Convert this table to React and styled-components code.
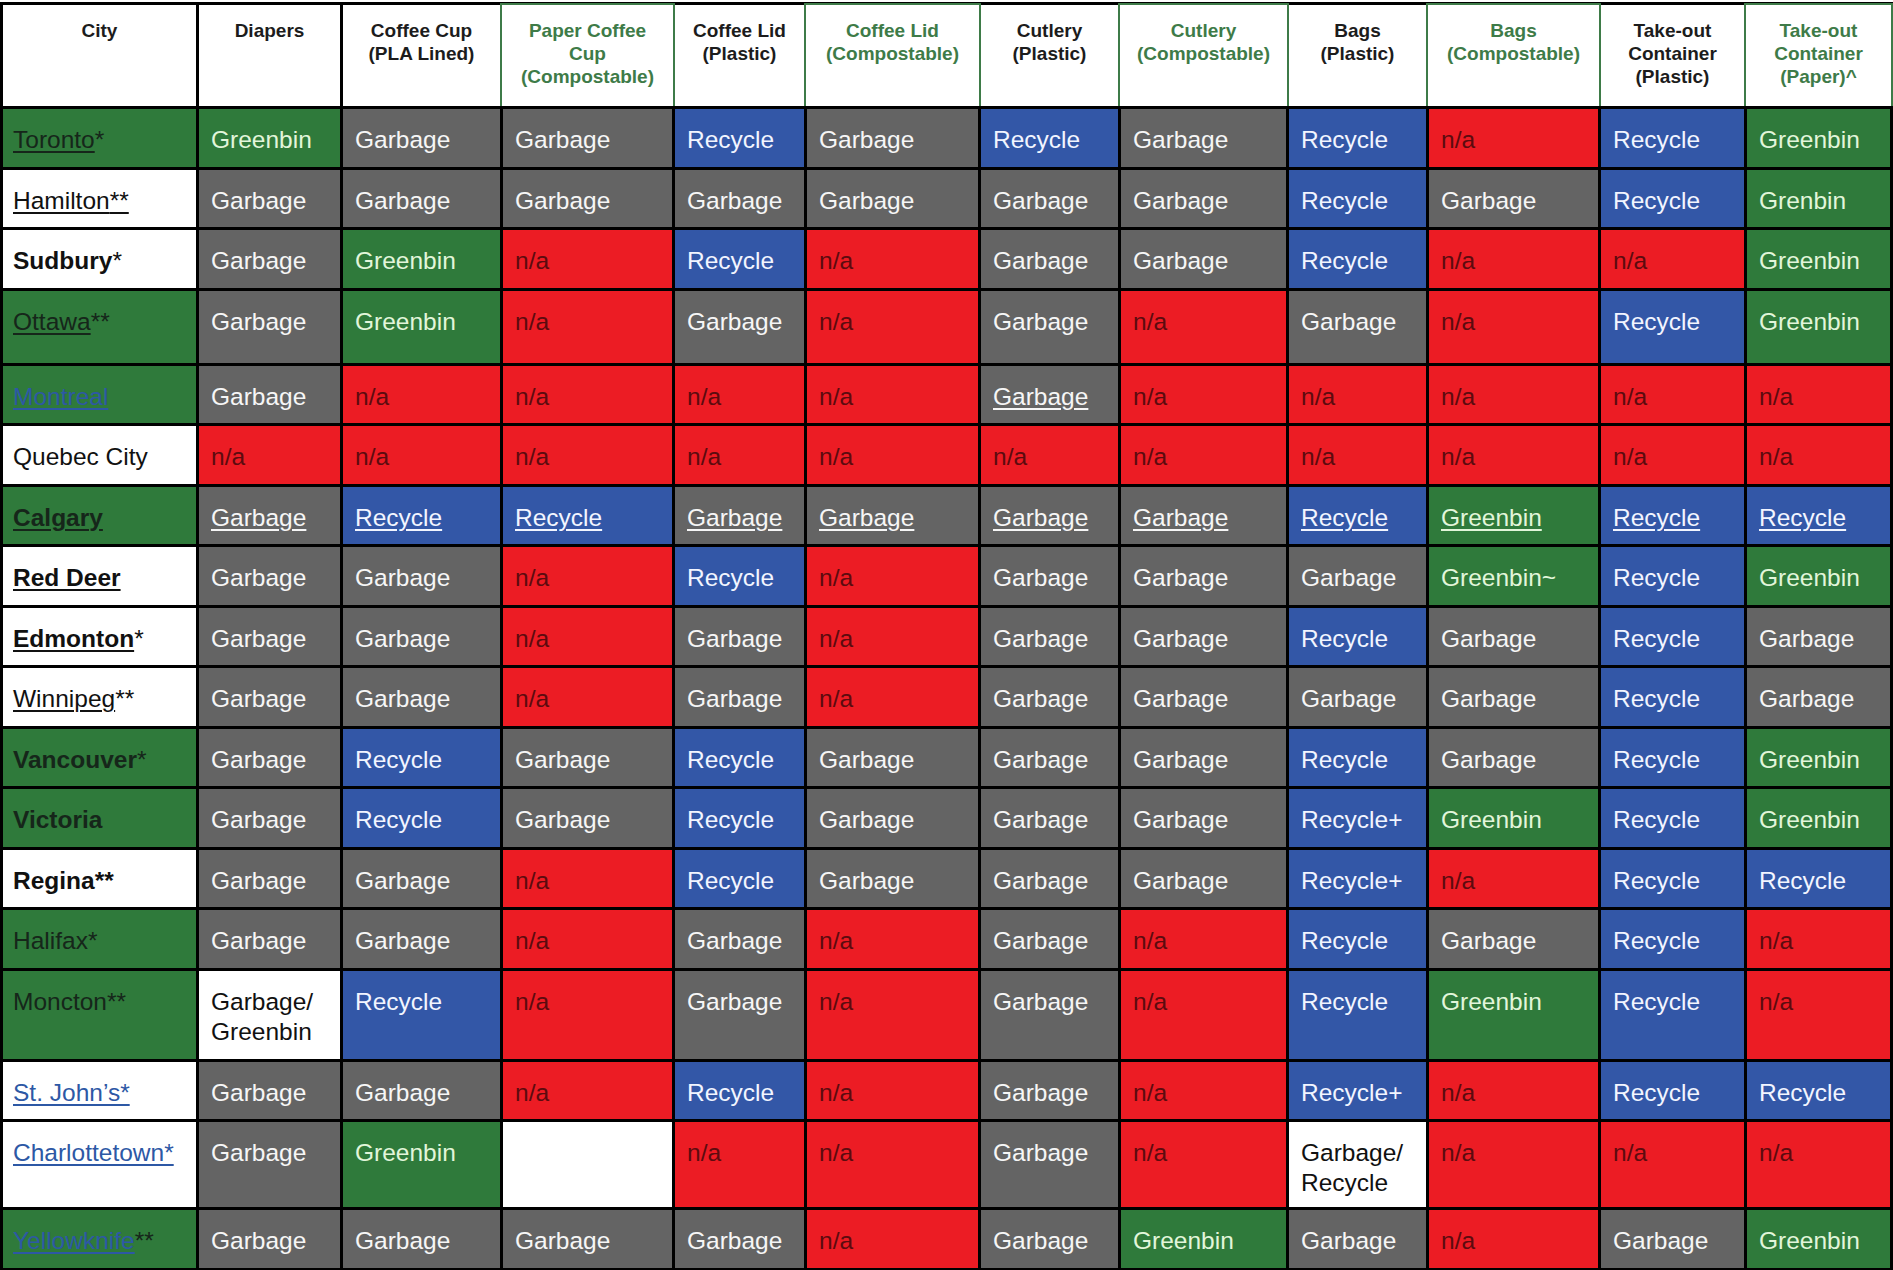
import React from "react";
import styled, { createGlobalStyle, css } from "styled-components";

const GlobalStyle = createGlobalStyle`
  html, body {
    margin: 0;
    padding: 0;
    background: #ffffff;
  }
  body {
    font-family: "Liberation Sans", Arial, sans-serif;
  }
`;

const COLS = [193, 141, 157, 169, 129, 171, 137, 165, 137, 169, 143, 143];

const palette = {
  garbage: { bg: "#646464", fg: "#f6f6f6" },
  recycle: { bg: "#3357a7", fg: "#f2f5ff" },
  green: { bg: "#2f7a3b", fg: "#e2f6da" },
  na: { bg: "#ec1c24", fg: "#5c0b0f" },
  white: { bg: "#ffffff", fg: "#111111" },
};

const Sheet = styled.div`
  position: relative;
  z-index: 0;
  margin-top: 2px;
  width: 1893px;
  box-sizing: border-box;
  display: grid;
  grid-template-columns: ${COLS.map((c) => c + "px").join(" ")};
  grid-template-rows: ${(p) => p.$rows};
  gap: 3px;
  padding: 3px;
  background: #000000;
`;

const HeadCell = styled.div`
  position: relative;
  padding: 14px 4px 0;
  text-align: center;
  font-weight: bold;
  font-size: 19px;
  line-height: 23px;
  white-space: pre-line;
  color: ${(p) => (p.$green ? "#3e7b48" : "#1c1c1c")};
  background: ${(p) => (p.$green ? "transparent" : "#ffffff")};
  ${(p) =>
    p.$green &&
    css`
      &::before {
        content: "";
        position: absolute;
        top: -2px;
        left: -3px;
        right: -3px;
        bottom: 0;
        background: #ffffff;
        border: 2px solid #3e7b48;
        border-bottom: none;
        z-index: -1;
      }
    `}
`;

const Cell = styled.div`
  padding: 16px 6px 0 12px;
  font-size: 24.5px;
  line-height: 30px;
  white-space: pre-line;
  background: ${(p) => palette[p.$kind].bg};
  color: ${(p) => palette[p.$kind].fg};
  text-decoration: ${(p) => (p.$u ? "underline" : "none")};
  text-decoration-thickness: 2px;
  text-underline-offset: 3px;
`;

const CityCell = styled.div`
  padding: 16px 4px 0 10px;
  font-size: 24.5px;
  line-height: 30px;
  white-space: nowrap;
  background: ${(p) => (p.$green ? "#2f7a3b" : "#ffffff")};
  color: ${(p) => (p.$green ? "#16261a" : "#111111")};
`;

const CityName = styled.span`
  font-weight: ${(p) => (p.$bold ? "bold" : "normal")};
  text-decoration: ${(p) => (p.$u ? "underline" : "none")};
  text-decoration-thickness: 2px;
  text-underline-offset: 3px;
  color: ${(p) => (p.$link ? "#2d58a5" : "inherit")};
`;

const Tail = styled.span`
  font-weight: ${(p) => (p.$bold ? "bold" : "normal")};
`;

const HEADERS = [
  ["City", false],
  ["Diapers", false],
  ["Coffee Cup\n(PLA Lined)", false],
  ["Paper Coffee\nCup\n(Compostable)", true],
  ["Coffee Lid\n(Plastic)", false],
  ["Coffee Lid\n(Compostable)", true],
  ["Cutlery\n(Plastic)", false],
  ["Cutlery\n(Compostable)", true],
  ["Bags\n(Plastic)", false],
  ["Bags\n(Compostable)", true],
  ["Take-out\nContainer\n(Plastic)", false],
  ["Take-out\nContainer\n(Paper)^", true],
];

// u: "name" underlines the city only, "all" also the asterisks
const ROWS = [
  { name: "Toronto", tail: "*", green: true, u: "name", h: 57.5,
    cells: ["Greenbin", "Garbage", "Garbage", "Recycle", "Garbage", "Recycle", "Garbage", "Recycle", "n/a", "Recycle", "Greenbin"] },
  { name: "Hamilton", tail: "**", u: "all", h: 57.5,
    cells: ["Garbage", "Garbage", "Garbage", "Garbage", "Garbage", "Garbage", "Garbage", "Recycle", "Garbage", "Recycle", "Grenbin"] },
  { name: "Sudbury", tail: "*", bold: true, h: 57.5,
    cells: ["Garbage", "Greenbin", "n/a", "Recycle", "n/a", "Garbage", "Garbage", "Recycle", "n/a", "n/a", "Greenbin"] },
  { name: "Ottawa", tail: "**", green: true, u: "name", h: 72,
    cells: ["Garbage", "Greenbin", "n/a", "Garbage", "n/a", "Garbage", "n/a", "Garbage", "n/a", "Recycle", "Greenbin"] },
  { name: "Montreal", tail: "", green: true, u: "name", link: true, h: 57.5,
    cells: ["Garbage", "n/a", "n/a", "n/a", "n/a", "Garbage_", "n/a", "n/a", "n/a", "n/a", "n/a"] },
  { name: "Quebec City", tail: "", h: 57.5,
    cells: ["n/a", "n/a", "n/a", "n/a", "n/a", "n/a", "n/a", "n/a", "n/a", "n/a", "n/a"] },
  { name: "Calgary", tail: "", green: true, bold: true, u: "name", h: 57.5,
    cells: ["Garbage_", "Recycle_", "Recycle_", "Garbage_", "Garbage_", "Garbage_", "Garbage_", "Recycle_", "Greenbin_", "Recycle_", "Recycle_"] },
  { name: "Red Deer", tail: "", bold: true, u: "name", h: 57.5,
    cells: ["Garbage", "Garbage", "n/a", "Recycle", "n/a", "Garbage", "Garbage", "Garbage", "Greenbin~", "Recycle", "Greenbin"] },
  { name: "Edmonton", tail: "*", bold: true, u: "name", h: 57.5,
    cells: ["Garbage", "Garbage", "n/a", "Garbage", "n/a", "Garbage", "Garbage", "Recycle", "Garbage", "Recycle", "Garbage"] },
  { name: "Winnipeg", tail: "**", u: "name", h: 57.5,
    cells: ["Garbage", "Garbage", "n/a", "Garbage", "n/a", "Garbage", "Garbage", "Garbage", "Garbage", "Recycle", "Garbage"] },
  { name: "Vancouver", tail: "*", green: true, bold: true, h: 57.5,
    cells: ["Garbage", "Recycle", "Garbage", "Recycle", "Garbage", "Garbage", "Garbage", "Recycle", "Garbage", "Recycle", "Greenbin"] },
  { name: "Victoria", tail: "", green: true, bold: true, h: 57.5,
    cells: ["Garbage", "Recycle", "Garbage", "Recycle", "Garbage", "Garbage", "Garbage", "Recycle+", "Greenbin", "Recycle", "Greenbin"] },
  { name: "Regina", tail: "**", bold: true, boldTail: true, h: 57.5,
    cells: ["Garbage", "Garbage", "n/a", "Recycle", "Garbage", "Garbage", "Garbage", "Recycle+", "n/a", "Recycle", "Recycle"] },
  { name: "Halifax", tail: "*", green: true, h: 57.5,
    cells: ["Garbage", "Garbage", "n/a", "Garbage", "n/a", "Garbage", "n/a", "Recycle", "Garbage", "Recycle", "n/a"] },
  { name: "Moncton", tail: "**", green: true, h: 88,
    cells: ["Garbage/\nGreenbin", "Recycle", "n/a", "Garbage", "n/a", "Garbage", "n/a", "Recycle", "Greenbin", "Recycle", "n/a"] },
  { name: "St. John\u2019s*", tail: "", u: "name", link: true, h: 57.5,
    cells: ["Garbage", "Garbage", "n/a", "Recycle", "n/a", "Garbage", "n/a", "Recycle+", "n/a", "Recycle", "Recycle"] },
  { name: "Charlottetown*", tail: "", u: "name", link: true, h: 85,
    cells: ["Garbage", "Greenbin", "", "n/a", "n/a", "Garbage", "n/a", "Garbage/\nRecycle", "n/a", "n/a", "n/a"] },
  { name: "Yellowknife", tail: "**", green: true, u: "name", link: true, h: 57.5,
    cells: ["Garbage", "Garbage", "Garbage", "Garbage", "n/a", "Garbage", "Greenbin", "Garbage", "n/a", "Garbage", "Greenbin"] },
];

function kindOf(text) {
  if (text === "" || text.includes("/\n")) return "white";
  if (text.startsWith("Garbage")) return "garbage";
  if (text.startsWith("Recycle")) return "recycle";
  if (text.startsWith("Gre")) return "green";
  return "na";
}

function City({ row }) {
  const whole = row.u === "all";
  return (
    <CityCell $green={row.green}>
      <CityName $u={!!row.u} $link={row.link} $bold={row.bold}>
        {row.name}
        {whole && row.tail}
      </CityName>
      {!whole && row.tail && <Tail $bold={row.boldTail}>{row.tail}</Tail>}
    </CityCell>
  );
}

export default function App() {
  const rows = ["101px", ...ROWS.map((r) => r.h + "px")].join(" ");
  return (
    <>
      <GlobalStyle />
      <Sheet $rows={rows}>
        {HEADERS.map(([label, green]) => (
          <HeadCell key={label} $green={green}>
            {label}
          </HeadCell>
        ))}
        {ROWS.map((row) => (
          <React.Fragment key={row.name}>
            <City row={row} />
            {row.cells.map((c, i) => {
              const u = c.endsWith("_");
              const text = u ? c.slice(0, -1) : c;
              return (
                <Cell key={i} $kind={kindOf(text)} $u={u}>
                  {text}
                </Cell>
              );
            })}
          </React.Fragment>
        ))}
      </Sheet>
    </>
  );
}
